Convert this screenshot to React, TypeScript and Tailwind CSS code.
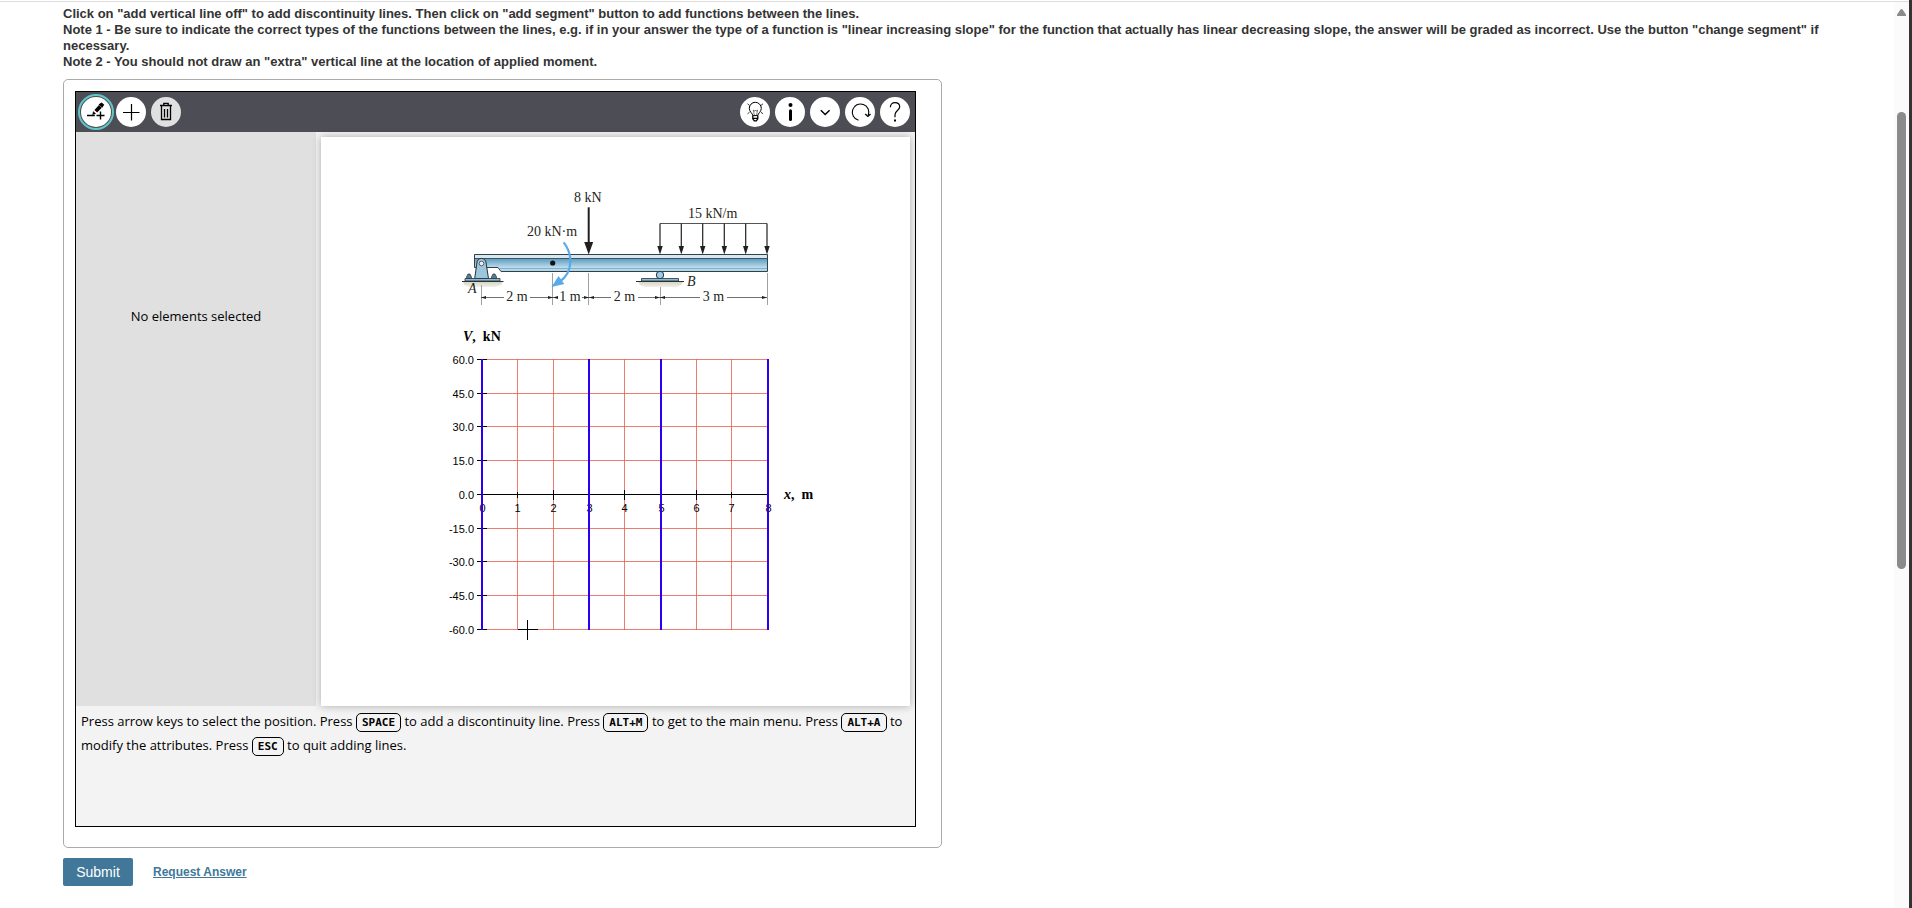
import type { ReactNode } from 'react'
import clsx from 'clsx'

const gridX = [161, 196, 232, 268, 303, 340, 375, 410, 447]
const gridY = [39, 73, 106, 140, 174, 208, 241, 275, 309]
const yLabels = ['60.0', '45.0', '30.0', '15.0', '0.0', '-15.0', '-30.0', '-45.0', '-60.0']
const discontinuities = [0, 3, 5, 8]
const loadX = [339, 360.3, 381.7, 403.3, 424.7, 446]

interface ToolButtonProps {
  label: string
  active?: boolean
  disabled?: boolean
  children: ReactNode
}

function ToolButton({ label, active, disabled, children }: ToolButtonProps) {
  return (
    <button
      type="button"
      aria-label={label}
      disabled={disabled}
      className={clsx(
        'size-[30px] shrink-0 rounded-full text-black',
        disabled ? 'bg-[#e0e0e0]' : 'bg-white',
        active && 'outline-2 outline-offset-1 outline-[#5fc7ca]',
      )}
    >
      <svg viewBox="0 0 30 30" className="size-[30px]" fill="none" stroke="currentColor" strokeWidth="1.2">
        {children}
      </svg>
    </button>
  )
}

function Toolbar() {
  return (
    <div className="flex h-10 items-center justify-between bg-[#4d4d55] px-[5px]">
      <div className="flex gap-[5px]">
        <ToolButton label="Add vertical line off" active>
          <path d="M6 18.5h7.800M19.500 14.500v8M15.500 18.500h8" strokeWidth="1.400" />
          <path d="M14.800 14.200l4.600-4.800" strokeWidth="3.800" />
          <path d="M18.600 7.600l2-1.300 1.800 1.500-1.300 2z" fill="currentColor" />
          <path d="M11.600 17.600l.8-3 2.200 2.100z" fill="currentColor" strokeWidth=".5" />
        </ToolButton>
        <ToolButton label="Add segment">
          <path d="M7 15.500h16.500M15.500 7v16.500" />
        </ToolButton>
        <ToolButton label="Delete" disabled>
          <path d="M9 8.500h12M12.800 8V6.400h4.400V8M10.500 9v13.500h9V9M13.500 12v8.500M16.500 12v8.500" strokeWidth="1.300" />
        </ToolButton>
      </div>
      <div className="flex gap-[5px]">
        <ToolButton label="Hint">
          <path d="M12.800 18.600c0-2.200-3.500-3.600-3.500-7.300a6 6 0 0 1 12 0c0 3.700-3.500 5.100-3.500 7.300z" strokeWidth="1" />
          <path d="M12.800 18.600v3.200l1.500 2h2l1.500-2v-3.200M12.800 21.300h5" strokeWidth="1.300" />
          <path d="M14.300 18l-1-5 1.500 1.200.600-1 .700 1 1.500-1.200-1 5" strokeWidth=".5" />
          <path d="M7.500 6.800l2 1.600M23 6.800l-2 1.600M7.500 16.800l2-1.600M23 16.800l-2-1.600" strokeWidth=".8" />
        </ToolButton>
        <ToolButton label="Information">
          <circle cx="15.500" cy="8" r="2" fill="currentColor" stroke="none" />
          <path d="M15.500 13.800v8.800" strokeWidth="3" strokeLinecap="round" />
        </ToolButton>
        <ToolButton label="More">
          <path d="M10.800 13.300l4.400 4.200 4.400-4.200" strokeWidth="1.500" />
        </ToolButton>
        <ToolButton label="Reset">
          <path d="M13.500 23.300A8.300 8.300 0 1 1 23.200 18.500" strokeWidth="1.100" />
          <path d="M20.200 17l2.700 2.400 2.600-2.400" strokeWidth="1.400" />
        </ToolButton>
        <ToolButton label="Help">
          <path d="M10.400 10.300c0-3 1.900-4.700 4.600-4.700s4.700 1.700 4.700 4.200c0 3.500-4.700 4-4.700 7.800v2.600" strokeWidth="1.200" />
          <path d="M14 23.400h2" strokeWidth="2" />
        </ToolButton>
      </div>
    </div>
  )
}

// Dimension line with an arrowhead at each end and a gap for its text
function Dimension({ from, to, gapFrom, gapTo, label }: { from: number; to: number; gapFrom: number; gapTo: number; label: string }) {
  return (
    <g>
      <path d={`M${from} 160.5H${gapFrom}M${gapTo} 160.5H${to}`} stroke="#333" strokeWidth=".7" />
      <path d={`M${from} 160.5l5-1.6v3.2zM${to} 160.5l-5-1.6v3.2z`} fill="#222" />
      <text x={(gapFrom + gapTo) / 2} y="164" textAnchor="middle">{label}</text>
    </g>
  )
}

function BeamDiagram() {
  return (
    <svg
      viewBox="0 0 589 183"
      className="block w-full font-['Liberation_Serif',serif] text-[14px]"
      fill="#231f20"
      role="img"
      aria-label="Beam with supports A and B"
    >
      <defs>
        <linearGradient id="web" x1="0" y1="0" x2="0" y2="1">
          <stop offset="0" stopColor="#4b8bb2" />
          <stop offset=".35" stopColor="#6fa9c9" />
          <stop offset=".8" stopColor="#c3dfee" />
          <stop offset="1" stopColor="#a9cfe3" />
        </linearGradient>
        <linearGradient id="ground" x1="0" y1="0" x2="0" y2="1">
          <stop offset="0" stopColor="#d3cfbb" />
          <stop offset="1" stopColor="#f1f0e9" />
        </linearGradient>
      </defs>

      <path d="M142 144h40l-2 4-6 2h-26l-5-2z" fill="url(#ground)" />
      <path d="M317 144h46l-3 4-5 2h-31l-5-2z" fill="url(#ground)" />

      {/* beam */}
      <path d="M153.500 117.500h293v17H180l-3-4h-23.500z" fill="url(#web)" stroke="#33414a" />
      <path d="M154 118h292v3H154z" fill="#dbe7ee" />
      <path d="M154 121.500h292" stroke="#33414a" strokeWidth=".8" />
      <path d="M179 131.500h267" stroke="#6fa6c4" strokeWidth=".8" />

      {/* pin support A */}
      <path d="M153.700 141.500l2.200-15.500a4.600 4.600 0 0 1 9.200 0l2.400 15.500z" fill="#9dc5de" stroke="#26323a" />
      <circle cx="160.500" cy="126.500" r="2.300" fill="#e7f0f5" stroke="#444" strokeWidth=".8" />
      <path d="M145.500 141.500v-1.500l1.500-3h2l1.500 3v1.500zM170.500 141.500v-1.500l1.500-3h2l1.500 3v1.500z" fill="#567d95" stroke="#26323a" strokeWidth=".7" />
      <path d="M144 141.500h35v2.500h-35z" fill="#8db9d3" stroke="#26323a" strokeWidth=".8" />
      <path d="M141 144.500h41.500" stroke="#26323a" />

      {/* roller support B */}
      <circle cx="339" cy="138" r="3.700" fill="#9dcbe8" stroke="#26323a" />
      <path d="M320.500 141.500h37v2.500h-37z" fill="#8db9d3" stroke="#26323a" strokeWidth=".8" />
      <path d="M315 144.500h48" stroke="#26323a" />

      {/* applied moment */}
      <circle cx="231.700" cy="126" r="2.600" fill="#111" />
      <path d="M242.700 105.300C251 116 253.500 134 238.500 145" fill="none" stroke="#57abeb" strokeWidth="2.200" />
      <path d="M230.500 150l7-11 5.800 8z" fill="#57abeb" />

      {/* loads */}
      <path d="M267.700 70.300V107" stroke="#231f20" strokeWidth="2" />
      <path d="M263.200 105h9l-4.500 12.500z" />
      <path d="M339 86.500h107" stroke="#555" />
      {loadX.map((x) => (
        <g key={x}>
          <path d={`M${x} 86.5V111`} stroke="#231f20" strokeWidth="1.2" />
          <path d={`M${x - 2.7} 109h5.4l-2.7 8.5z`} />
        </g>
      ))}

      <path
        d="M160.500 148v20M231.500 136v32M267.500 136v32M339.500 150v18M446.500 136v32"
        stroke="#888"
        strokeWidth=".8"
      />
      <Dimension from={160} to={232} gapFrom={183} gapTo={209} label="2 m" />
      <Dimension from={232} to={268} gapFrom={237} gapTo={261} label="1 m" />
      <Dimension from={268} to={339} gapFrom={290} gapTo={317} label="2 m" />
      <Dimension from={339} to={446} gapFrom={379} gapTo={406} label="3 m" />

      <text x="253" y="65">8 kN</text>
      <text x="206" y="99">20 kN·m</text>
      <text x="367" y="81">15 kN/m</text>
      <text x="147" y="156" fontStyle="italic">A</text>
      <text x="366" y="149" fontStyle="italic">B</text>
    </svg>
  )
}

function ShearPlot() {
  return (
    <svg viewBox="0 0 589 386" className="block w-full font-['Liberation_Sans',sans-serif] text-[11px]" role="img" aria-label="Shear diagram">
      <g fill="#e85b4d" fillOpacity=".8">
        {gridX.slice(1, 8).map((x) => <rect key={x} x={x} y="39" width="1" height="271" />)}
        {gridY.map((y) => <rect key={y} x="161" y={y} width="286" height="1" />)}
      </g>
      <rect x="161" y="174" width="286" height="1" />
      {gridY.map((y, i) => (
        <g key={y}>
          <rect x="156" y={y} width="10" height="1" />
          <text x="153" y={y + 5} textAnchor="end">{yLabels[i]}</text>
        </g>
      ))}
      {gridX.map((x, i) => (
        <g key={x}>
          {i > 0 && i < 8 && <rect x={x} y={i % 2 ? 172 : 170} width="1" height={i % 2 ? 6 : 10} />}
          <text x={x + 0.5} y="192" textAnchor="middle">{i}</text>
        </g>
      ))}
      {discontinuities.map((d) => (
        <rect key={d} x={gridX[d] - 1} y="39" width="2" height="271" fill="#2a00f5" />
      ))}
      {/* cursor */}
      <path d="M197 309.500h20M206.500 300v20" stroke="#000" />
      <g className="font-['Liberation_Serif',serif] text-[14px] font-bold">
        <text x="142" y="21"><tspan fontStyle="italic">V</tspan>,&nbsp; kN</text>
        <text x="463" y="179"><tspan fontStyle="italic">x</tspan>,&nbsp; m</text>
      </g>
    </svg>
  )
}

function Key({ children }: { children: ReactNode }) {
  return (
    <kbd className="rounded-[5px] border border-black px-[5px] py-[2px] font-['DejaVu_Sans_Mono',monospace] text-[11px] font-bold">
      {children}
    </kbd>
  )
}

function DiagramEditor() {
  return (
    <section className="w-[879px] max-w-full rounded-[5px] border border-[#aaa] px-[11px] pt-[11px] pb-5">
      <div className="mr-[14px] border border-black bg-[#f3f3f3] font-['Open_Sans',sans-serif] text-[13px] text-black">
        <Toolbar />
        <div className="flex">
          <div className="flex w-[240px] shrink-0 items-center justify-center bg-[#e0e0e0] pb-[204px]">
            No elements selected
          </div>
          <div className="mx-[5px] mt-[5px] min-w-0 flex-1 bg-white shadow-[0_0_8px_rgba(0,0,0,0.3)]">
            <BeamDiagram />
            <ShearPlot />
          </div>
        </div>
        <p className="min-h-[120px] px-[5px] pt-1 leading-[23px]">
          <span>Press arrow keys to select the position. Press</span> <Key>SPACE</Key>{' '}
          <span>to add a discontinuity line. Press</span> <Key>ALT+M</Key>{' '}
          <span>to get to the main menu. Press</span> <Key>ALT+A</Key>{' '}
          <span>to modify the attributes. Press</span> <Key>ESC</Key>{' '}
          <span>to quit adding lines.</span>
        </p>
      </div>
    </section>
  )
}

function Scrollbar() {
  return (
    <div className="flex w-[15px] shrink-0 flex-col items-center bg-[#fbfbfb] pt-[7px]" aria-hidden="true">
      <svg viewBox="0 0 9 7" className="h-[7px] w-[9px]" fill="#8b8b8b">
        <path d="M3.500.5q1-1 2 0L9 5.500V7H0V5.500z" />
      </svg>
      <div className="mt-[96px] h-[457px] w-[9px] rounded-full bg-[#8b8b8b]" />
    </div>
  )
}

export default function App() {
  return (
    <div className="flex min-h-screen bg-white pt-px font-['Liberation_Sans',Arial,sans-serif]">
      <div className="flex min-w-0 flex-1 border-t border-[#ddd]">
        <main className="min-w-0 flex-1 px-[63px] pt-1">
          <div className="mb-[9px] text-[13px] leading-4 font-bold text-[#333]">
            <p>Click on "add vertical line off" to add discontinuity lines. Then click on "add segment" button to add functions between the lines.</p>
            <p>
              Note 1 - Be sure to indicate the correct types of the functions between the lines, e.g. if in your answer the type of a
              function is "linear increasing slope" for the function that actually has linear decreasing slope, the answer will be graded
              as incorrect. Use the button "change segment" if necessary.
            </p>
            <p>Note 2 - You should not draw an "extra" vertical line at the location of applied moment.</p>
          </div>
          <DiagramEditor />
          <div className="mt-[10px] flex items-center gap-5">
            <button type="button" className="h-7 w-[70px] rounded-xs bg-[#417899] text-[14px] text-white">Submit</button>
            <a href="#answer" className="text-[12px] font-bold text-[#417899] underline">Request Answer</a>
          </div>
        </main>
        <Scrollbar />
      </div>
      <div className="-mt-px w-[3px] shrink-0 bg-[#333]" />
    </div>
  )
}
